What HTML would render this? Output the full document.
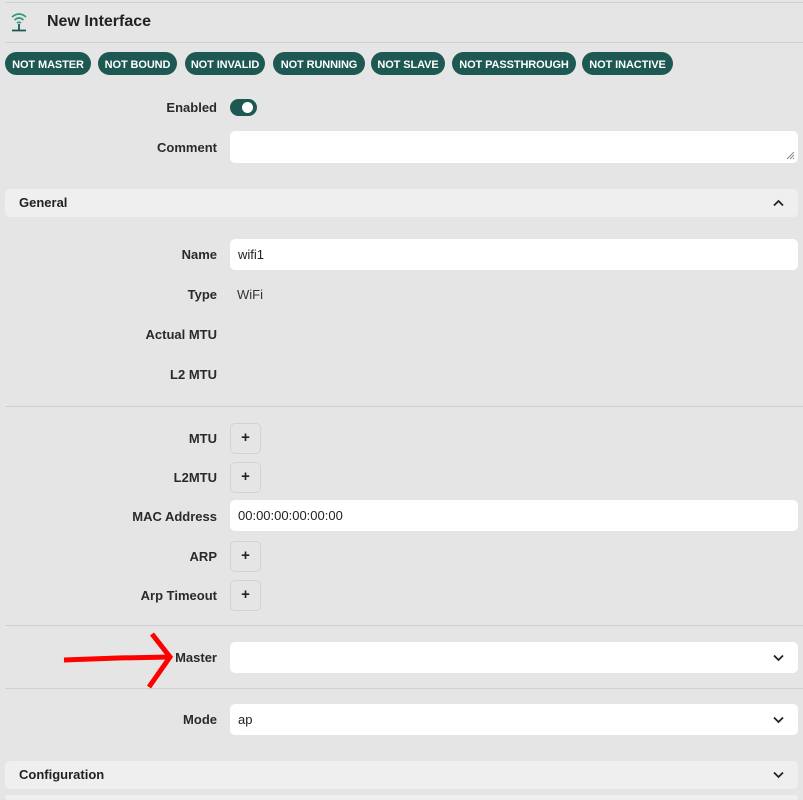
<!DOCTYPE html>
<html><head><style>
*{box-sizing:border-box;margin:0;padding:0}
html,body{width:803px;height:800px;overflow:hidden}
body{background:#e4e5e4;font-family:"Liberation Sans",sans-serif;position:relative;color:#222}
.a{position:absolute}
.hl{position:absolute;left:5px;right:0;height:1px;background:#cfd0cf}
.pill{position:absolute;top:52px;height:23px;border-radius:12px;background:#1d5853;color:#fff;font-size:11px;font-weight:bold;line-height:24px;padding-top:1px;text-align:center;letter-spacing:-0.1px}
.lbl{position:absolute;right:586px;font-size:13px;font-weight:bold;color:#2a2a2a;text-align:right;white-space:nowrap}
.inp{position:absolute;left:230px;width:568px;height:31px;background:#fff;border-radius:5px;font-size:13px;line-height:31px;padding-left:8px;color:#222}
.btn{position:absolute;left:230px;width:31px;height:31px;border:1px solid #d2d3d2;border-radius:5px;text-align:center;line-height:28px;font-size:15px;font-weight:bold;color:#222}
.bar{position:absolute;left:5px;width:793px;height:28px;background:#efefef;border-radius:5px;font-size:13px;font-weight:bold;line-height:28px;padding-left:14px}
.chev{position:absolute;right:14px;top:10px}
</style></head><body>
<div class="hl" style="top:2px"></div>
<svg class="a" style="left:9px;top:11px" width="20" height="22" viewBox="0 0 20 22"><path d="M3 6 Q10 0 17 6 M5.5 9 Q10 5 14.5 9 M8 12 Q10 10.5 12 12" stroke="#2e9a7a" stroke-width="1.6" fill="none"/><path d="M10 13 V19 M3 19.5 H17" stroke="#1d5853" stroke-width="1.8"/></svg>
<div class="a" style="left:47px;top:13px;font-size:16px;font-weight:bold;color:#222">New Interface</div>
<div class="hl" style="top:42px"></div>
<div class="pill" style="left:5px;width:86px">NOT MASTER</div>
<div class="pill" style="left:98px;width:79px">NOT BOUND</div>
<div class="pill" style="left:185px;width:80px">NOT INVALID</div>
<div class="pill" style="left:273px;width:92px">NOT RUNNING</div>
<div class="pill" style="left:371px;width:74px">NOT SLAVE</div>
<div class="pill" style="left:452px;width:124px">NOT PASSTHROUGH</div>
<div class="pill" style="left:582px;width:91px">NOT INACTIVE</div>
<div class="lbl" style="top:100px">Enabled</div>
<div class="a" style="left:230px;top:99px;width:27px;height:17px;border-radius:9px;background:#1d5853"><div class="a" style="left:12px;top:3px;width:11px;height:11px;border-radius:50%;background:#fff"></div></div>
<div class="lbl" style="top:140px">Comment</div>
<div class="inp" style="top:131px;height:32px"></div>
<svg class="a" style="left:785px;top:150px" width="10" height="10"><path d="M9 2 L2 9 M9 5 L5 9 M9 8 L8 9" stroke="#888" stroke-width="1"/></svg>
<div class="bar" style="top:189px">General<svg class="chev" width="11" height="8"><path d="M1 6.5 L5.5 2 L10 6.5" stroke="#222" stroke-width="1.8" fill="none"/></svg></div>
<div class="lbl" style="top:247px">Name</div>
<div class="inp" style="top:239px">wifi1</div>
<div class="lbl" style="top:287px">Type</div>
<div class="a" style="left:237px;top:287px;font-size:13px;color:#333">WiFi</div>
<div class="lbl" style="top:327px">Actual MTU</div>
<div class="lbl" style="top:367px">L2 MTU</div>
<div class="hl" style="top:406px"></div>
<div class="lbl" style="top:431px">MTU</div>
<div class="btn" style="top:423px">+</div>
<div class="lbl" style="top:470px">L2MTU</div>
<div class="btn" style="top:462px">+</div>
<div class="lbl" style="top:509px">MAC Address</div>
<div class="inp" style="top:500px">00:00:00:00:00:00</div>
<div class="lbl" style="top:549px">ARP</div>
<div class="btn" style="top:541px">+</div>
<div class="lbl" style="top:588px">Arp Timeout</div>
<div class="btn" style="top:580px">+</div>
<div class="hl" style="top:625px"></div>
<div class="lbl" style="top:650px">Master</div>
<div class="inp" style="top:642px"><svg class="chev" style="top:12px" width="11" height="8"><path d="M1 1.5 L5.5 6 L10 1.5" stroke="#222" stroke-width="1.8" fill="none"/></svg></div>
<div class="hl" style="top:688px"></div>
<div class="lbl" style="top:712px">Mode</div>
<div class="inp" style="top:704px">ap<svg class="chev" style="top:12px" width="11" height="8"><path d="M1 1.5 L5.5 6 L10 1.5" stroke="#222" stroke-width="1.8" fill="none"/></svg></div>
<div class="bar" style="top:761px">Configuration<svg class="chev" width="11" height="8"><path d="M1 1.5 L5.5 6 L10 1.5" stroke="#222" stroke-width="1.8" fill="none"/></svg></div>
<div class="bar" style="top:795px;height:5px"></div>
<svg class="a" style="left:0;top:620px" width="200" height="80"><path d="M64 40 L118 38 L170 37" stroke="#f00" stroke-width="5" fill="none"/><path d="M152 14 L170 37 L149 67" stroke="#f00" stroke-width="5" fill="none"/></svg>
</body></html>
